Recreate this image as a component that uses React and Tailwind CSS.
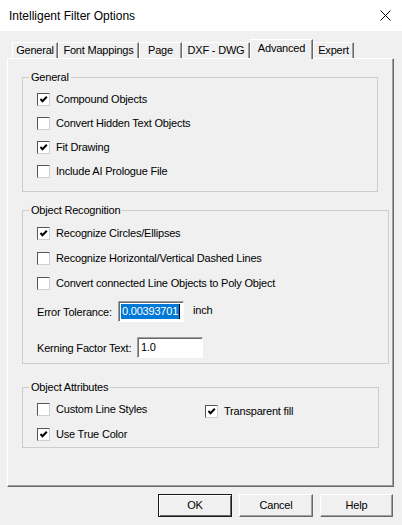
import React from "react";

function Check({ checked }) {
  return (
    <span className="flex h-[13px] w-[13px] shrink-0 items-center justify-center border border-t-[#555] border-l-[#555] border-r-[#cfcfcf] border-b-[#cfcfcf] bg-white">
      {checked && (
        <svg width="9" height="9" viewBox="0 0 9 9">
          <polyline points="1.5,4 3.5,6.3 7.8,1.8" fill="none" stroke="#000" strokeWidth="2" />
        </svg>
      )}
    </span>
  );
}

function Option({ label, checked, className = "" }) {
  return (
    <label className={`flex h-[24px] items-center gap-[6px] ${className}`}>
      <Check checked={checked} />
      <span>{label}</span>
    </label>
  );
}

function Group({ title, className = "", children }) {
  return (
    <fieldset className={`ml-[14px] border border-[#cdcdcd] p-0 ${className}`}>
      <legend className="ml-[6px] px-[2px] leading-[14px]">{title}</legend>
      {children}
    </fieldset>
  );
}

function Tab({ label, width, active }) {
  if (active) {
    return (
      <div
        className="relative z-10 -mb-px flex h-[20px] items-center justify-center border-t border-l border-t-white border-l-white border-r border-r-[#696969] bg-[#f0f0f0] pb-[3px] shadow-[inset_-1px_0_0_#a0a0a0]"
        style={{ width }}
      >
        {label}
      </div>
    );
  }
  return (
    <div
      className="flex h-[16px] items-center justify-center border-t border-l border-t-white border-l-white border-r border-r-[#696969] shadow-[inset_-1px_0_0_#a0a0a0]"
      style={{ width }}
    >
      {label}
    </div>
  );
}

function Button({ label, isDefault, width }) {
  return (
    <button
      className={
        isDefault
          ? "flex h-[23px] items-center justify-center border border-[#1a1a1a] bg-[#f0f0f0] shadow-[inset_1px_1px_0_#fff,inset_-1px_-1px_0_#696969]"
          : "flex h-[23px] items-center justify-center border border-t-white border-l-white border-r-[#696969] border-b-[#696969] bg-[#f0f0f0] shadow-[inset_-1px_-1px_0_#a0a0a0]"
      }
      style={{ width }}
    >
      {label}
    </button>
  );
}

function Field({ value, width, selected }) {
  return (
    <div
      className="flex h-[21px] items-center border border-t-[#a0a0a0] border-l-[#a0a0a0] border-r-white border-b-white bg-white pl-[2px] shadow-[inset_1px_1px_0_#696969]"
      style={{ width }}
    >
      {selected ? (
        <>
          <span className="bg-[#0078d7] px-[1px] leading-[15px] text-white">{value}</span>
          <span className="h-[15px] w-px bg-black" />
        </>
      ) : (
        <span className="px-[1px] leading-[15px]">{value}</span>
      )}
    </div>
  );
}

const tabs = [
  ["General", 46],
  ["Font Mappings", 81],
  ["Page", 43],
  ["DXF - DWG", 68],
  ["Advanced", 63, true],
  ["Expert", 41],
];

export default function App() {
  return (
    <div className="h-[525px] w-[402px] overflow-hidden bg-[#f0f0f0] font-['Liberation_Sans',Arial,sans-serif] text-[11px] tracking-[-0.2px] text-black">
      <div className="flex h-[31px] items-center justify-between bg-white pl-[9px] pr-[11px]">
        <span className="text-[12px] tracking-normal">Intelligent Filter Options</span>
        <svg width="11" height="11" viewBox="0 0 11 11">
          <path d="M0.5 0.5 L10.5 10.5 M10.5 0.5 L0.5 10.5" stroke="#000" strokeWidth="1" />
        </svg>
      </div>

      <div className="flex h-[27px] items-end pl-[12px]">
        {tabs.map(([label, w, active]) => (
          <Tab key={label} label={label} width={w} active={active} />
        ))}
      </div>

      <div className="ml-[7px] h-[429px] w-[387px] border border-t-white border-l-white border-r-[#696969] border-b-[#696969] shadow-[inset_-1px_-1px_0_#a0a0a0]">
        <Group title="General" className="mt-[11px] w-[356px]">
          <div className="flex flex-col pt-[3px] pb-[8px] pl-[14px]">
            <Option label="Compound Objects" checked />
            <Option label="Convert Hidden Text Objects" />
            <Option label="Fit Drawing" checked />
            <Option label="Include AI Prologue File" />
          </div>
        </Group>

        <Group title="Object Recognition" className="mt-[11px] w-[367px]">
          <div className="flex flex-col pt-[4px] pb-[5px] pl-[14px]">
            <div className="flex flex-col gap-px">
              <Option label="Recognize Circles/Ellipses" checked />
              <Option label="Recognize Horizontal/Vertical Dashed Lines" />
              <Option label="Convert connected Line Objects to Poly Object" />
            </div>
            <div className="mt-[6px] flex items-center">
              <span className="w-[81px] pt-[2px]">Error Tolerance:</span>
              <Field value="0.00393701" width={66} selected />
              <span className="ml-[9px] pb-[3px]">inch</span>
            </div>
            <div className="mt-[15px] flex items-center">
              <span className="w-[100px] pt-[2px]">Kerning Factor Text:</span>
              <Field value="1.0" width={66} />
            </div>
          </div>
        </Group>

        <Group title="Object Attributes" className="mt-[16px] w-[357px]">
          <div className="grid grid-cols-[168px_1fr] gap-y-px pt-[3px] pb-px pl-[14px]">
            <Option label="Custom Line Styles" />
            <Option label="Transparent fill" checked className="pt-[4px]" />
            <Option label="Use True Color" checked />
          </div>
        </Group>
      </div>

      <div className="mt-[7px] flex justify-end gap-[7px] pr-[9px]">
        <Button label="OK" isDefault width={74} />
        <Button label="Cancel" width={74} />
        <Button label="Help" width={73} />
      </div>
    </div>
  );
}
